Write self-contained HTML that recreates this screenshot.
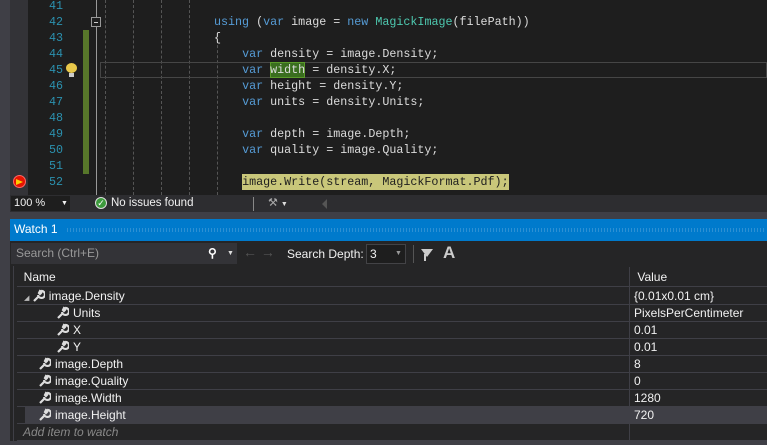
<!DOCTYPE html>
<html><head><meta charset="utf-8"><style>
*{margin:0;padding:0;box-sizing:border-box}
body{width:767px;height:445px;background:#3f3f46;position:relative;overflow:hidden;font-family:"Liberation Sans",sans-serif;color:#f1f1f1}
.a{position:absolute}
.code{font-family:"Liberation Mono",monospace;font-size:11.7px;white-space:pre;line-height:16px}
.ln{color:#2b91af;width:36px;text-align:right;left:27px}
.kw{color:#569cd6}.ty{color:#4ec9b0}.tx{color:#dcdcdc}
.dash{border-left:1px dashed #555;width:0}
.row{position:absolute;left:17px;width:750px;height:17px;border-bottom:1px solid #3f3f46;font-size:12px;line-height:16px;font-family:"Liberation Sans Narrow","Liberation Sans",sans-serif}
.row .v{position:absolute;left:617px;top:0}
.wr{display:inline-block;width:12px;height:13px;vertical-align:-2px;margin-right:4px}
</style></head><body>
<!-- editor -->
<div class="a" style="left:10px;top:0;width:757px;height:195px;background:#1e1e1e"></div>
<div class="a" style="left:10px;top:0;width:18px;height:195px;background:#333337"></div>
<div class="a" style="left:96px;top:0;width:1px;height:195px;background:#999"></div>
<div class="a dash" style="left:105px;top:0;height:195px"></div>
<div class="a dash" style="left:133px;top:0;height:195px"></div>
<div class="a dash" style="left:161px;top:0;height:195px"></div>
<div class="a dash" style="left:189px;top:0;height:195px"></div>
<div class="a dash" style="left:217px;top:40px;height:155px"></div>
<div class="a" style="left:83px;top:30px;width:6px;height:144px;background:#57772a"></div>
<div class="a" style="left:91px;top:17px;width:10px;height:10px;border:1px solid #999;background:#1e1e1e"><div class="a" style="left:2px;top:4px;width:4px;height:1px;background:#ccc"></div></div>
<div class="a" style="left:100px;top:62px;width:667px;height:16px;border:1px solid #464646"></div>
<div class="a" style="left:242px;top:174px;width:267px;height:16px;background:#c9c77a"></div>
<div class="a" style="left:270px;top:62px;width:35px;height:16px;background:#3a6e1f;border:1px solid #5a9a2a"></div>
<div class="a" style="left:66px;top:63px;width:12px;height:14px;"><div style="width:11px;height:10px;border-radius:50%;background:#e8c84a"></div><div style="width:5px;height:4px;margin-left:3px;background:#ccc"></div></div>
<div class="a" style="left:13px;top:175px;width:13px;height:13px;border-radius:50%;background:#e51400;border:1px solid #f66"><div style="margin:3px 0 0 2px;width:0;height:0;border-left:7px solid #ffcc00;border-top:3px solid transparent;border-bottom:3px solid transparent"></div></div>
<div class="a code ln" style="top:-2px">41
42
43
44
45
46
47
48
49
50
51
52</div>
<div class="a code tx" style="left:214px;top:14px"><span class="kw">using</span> (<span class="kw">var</span> image = <span class="kw">new</span> <span class="ty">MagickImage</span>(filePath))
{
    <span class="kw">var</span> density = image.Density;
    <span class="kw">var</span> width = density.X;
    <span class="kw">var</span> height = density.Y;
    <span class="kw">var</span> units = density.Units;

    <span class="kw">var</span> depth = image.Depth;
    <span class="kw">var</span> quality = image.Quality;

    <span style="color:#1e1e1e">image.Write(stream, MagickFormat.Pdf);</span></div>
<!-- status bar -->
<div class="a" style="left:10px;top:195px;width:757px;height:17px;background:#2d2d30"></div>
<div class="a" style="left:11px;top:196px;width:59px;height:15px;background:#1e1e1e;font-size:11px;line-height:15px;padding-left:3px">100 %<span style="position:absolute;left:50px;top:0;font-size:7px">▼</span></div>
<div class="a" style="left:95px;top:197px;width:12px;height:12px;border-radius:50%;background:#3c9a3c;border:1px solid #ddd;color:#fff;font-size:9px;line-height:10px;text-align:center">✓</div>
<div class="a" style="left:111px;top:196px;font-size:11.5px;line-height:15px">No issues found</div>
<div class="a" style="left:253px;top:197px;width:1px;height:14px;background:#888"></div>
<div class="a" style="left:268px;top:196px;font-size:11px;color:#aaa">⚒ <span style="font-size:7px;color:#ddd">▼</span></div>
<div class="a" style="left:322px;top:199px;width:0;height:0;border-right:5px solid #555;border-top:5px solid transparent;border-bottom:5px solid transparent"></div>
<!-- watch -->
<div class="a" style="left:10px;top:219px;width:757px;height:22px;background:#007acc"></div>
<div class="a" style="left:14px;top:222px;font-size:12px;color:#fff">Watch 1</div>
<div class="a" style="left:66px;top:228px;width:700px;height:4px;background-image:radial-gradient(#5aa7dd 0.6px,transparent 0.8px);background-size:3px 2px"></div>
<div class="a" style="left:10px;top:241px;width:757px;height:200px;background:#252526"></div>
<div class="a" style="left:11px;top:243px;width:226px;height:21px;background:#333337;font-size:12px;line-height:21px;padding-left:5px;color:#999">Search (Ctrl+E)<span style="position:absolute;left:197px;color:#fff;font-weight:bold">⚲</span><span style="position:absolute;left:216px;font-size:7px;color:#ddd">▼</span></div>
<div class="a" style="left:243px;top:244px;font-size:14px;color:#555">← →</div>
<div class="a" style="left:287px;top:247px;font-size:12px">Search Depth:</div>
<div class="a" style="left:366px;top:244px;width:40px;height:20px;border:1px solid #434346;background:#1e1e1e;font-size:12px;line-height:18px;padding-left:3px">3<span style="position:absolute;left:28px;font-size:7px;color:#999">▼</span></div>
<div class="a" style="left:413px;top:245px;width:1px;height:18px;background:#555"></div>
<div class="a" style="left:421px;top:249px;width:0;height:0;border-top:8px solid #ccc;border-left:6px solid transparent;border-right:6px solid transparent"></div>
<div class="a" style="left:424px;top:254px;width:2px;height:7px;background:#ccc"></div>
<div class="a" style="left:443px;top:243px;font-size:17px;font-weight:bold;color:#ccc">A</div>
<div class="a" style="left:13px;top:266px;width:754px;height:175px;border-left:1px solid #3f3f46"></div>
<div class="row" style="top:267px;height:20px;line-height:20px;background:#252526">&nbsp;&nbsp;Name<span class="v" style="line-height:20px">&nbsp;Value</span></div>
<div class="a" style="left:629px;top:267px;width:1px;height:174px;background:#3f3f46"></div>
<div class="row" style="top:288px;padding-left:7px"><span style="font-size:7px;color:#bbb">◢</span> <svg class="wr" viewBox="0 0 12 13"><path d="M1 12 L6 7 M5 6 A3.5 3.5 0 1 0 9 2 L8 4 L7 5 L6 4 L7.5 1" stroke="#ddd" stroke-width="2.2" fill="none"/></svg>image.Density<span class="v">{0.01x0.01 cm}</span></div>
<div class="row" style="top:305px;padding-left:40px"><svg class="wr" viewBox="0 0 12 13"><path d="M1 12 L6 7 M5 6 A3.5 3.5 0 1 0 9 2 L8 4 L7 5 L6 4 L7.5 1" stroke="#ddd" stroke-width="2.2" fill="none"/></svg>Units<span class="v">PixelsPerCentimeter</span></div>
<div class="row" style="top:322px;padding-left:40px"><svg class="wr" viewBox="0 0 12 13"><path d="M1 12 L6 7 M5 6 A3.5 3.5 0 1 0 9 2 L8 4 L7 5 L6 4 L7.5 1" stroke="#ddd" stroke-width="2.2" fill="none"/></svg>X<span class="v">0.01</span></div>
<div class="row" style="top:339px;padding-left:40px"><svg class="wr" viewBox="0 0 12 13"><path d="M1 12 L6 7 M5 6 A3.5 3.5 0 1 0 9 2 L8 4 L7 5 L6 4 L7.5 1" stroke="#ddd" stroke-width="2.2" fill="none"/></svg>Y<span class="v">0.01</span></div>
<div class="row" style="top:356px;padding-left:22px"><svg class="wr" viewBox="0 0 12 13"><path d="M1 12 L6 7 M5 6 A3.5 3.5 0 1 0 9 2 L8 4 L7 5 L6 4 L7.5 1" stroke="#ddd" stroke-width="2.2" fill="none"/></svg>image.Depth<span class="v">8</span></div>
<div class="row" style="top:373px;padding-left:22px"><svg class="wr" viewBox="0 0 12 13"><path d="M1 12 L6 7 M5 6 A3.5 3.5 0 1 0 9 2 L8 4 L7 5 L6 4 L7.5 1" stroke="#ddd" stroke-width="2.2" fill="none"/></svg>image.Quality<span class="v">0</span></div>
<div class="row" style="top:390px;padding-left:22px"><svg class="wr" viewBox="0 0 12 13"><path d="M1 12 L6 7 M5 6 A3.5 3.5 0 1 0 9 2 L8 4 L7 5 L6 4 L7.5 1" stroke="#ddd" stroke-width="2.2" fill="none"/></svg>image.Width<span class="v">1280</span></div>
<div class="row" style="top:407px;padding-left:22px;background:linear-gradient(90deg,#252526 8px,#3f3f46 8px)"><svg class="wr" viewBox="0 0 12 13"><path d="M1 12 L6 7 M5 6 A3.5 3.5 0 1 0 9 2 L8 4 L7 5 L6 4 L7.5 1" stroke="#ddd" stroke-width="2.2" fill="none"/></svg>image.Height<span class="v">720</span></div>
<div class="row" style="top:424px;padding-left:6px;color:#888;font-style:italic">Add item to watch</div>
</body></html>
